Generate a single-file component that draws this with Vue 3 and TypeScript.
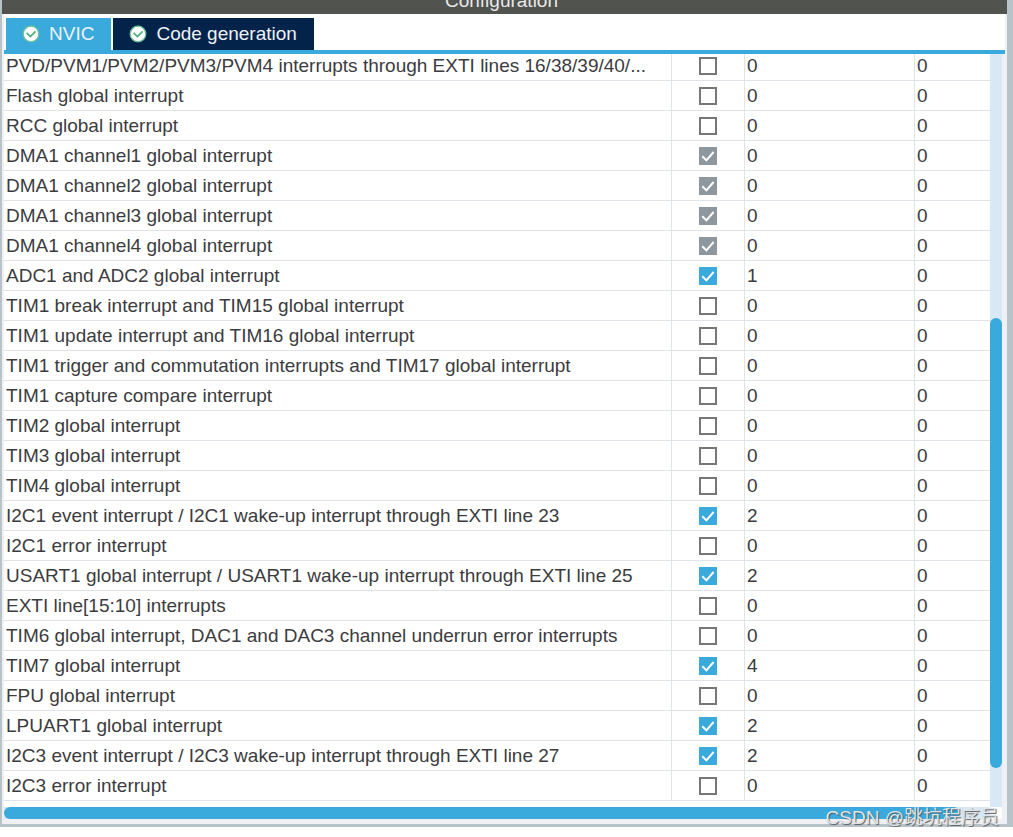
<script setup lang="ts">
import { ref } from 'vue'

interface Interrupt {
  name: string
  enabled: boolean
  locked: boolean
  preemption: number
  sub: number
}

const row = (name: string, enabled = false, preemption = 0, locked = false): Interrupt => ({
  name,
  enabled,
  locked,
  preemption,
  sub: 0,
})

const interrupts = ref<Interrupt[]>([
  row('PVD/PVM1/PVM2/PVM3/PVM4 interrupts through EXTI lines 16/38/39/40/...'),
  row('Flash global interrupt'),
  row('RCC global interrupt'),
  row('DMA1 channel1 global interrupt', true, 0, true),
  row('DMA1 channel2 global interrupt', true, 0, true),
  row('DMA1 channel3 global interrupt', true, 0, true),
  row('DMA1 channel4 global interrupt', true, 0, true),
  row('ADC1 and ADC2 global interrupt', true, 1),
  row('TIM1 break interrupt and TIM15 global interrupt'),
  row('TIM1 update interrupt and TIM16 global interrupt'),
  row('TIM1 trigger and commutation interrupts and TIM17 global interrupt'),
  row('TIM1 capture compare interrupt'),
  row('TIM2 global interrupt'),
  row('TIM3 global interrupt'),
  row('TIM4 global interrupt'),
  row('I2C1 event interrupt / I2C1 wake-up interrupt through EXTI line 23', true, 2),
  row('I2C1 error interrupt'),
  row('USART1 global interrupt / USART1 wake-up interrupt through EXTI line 25', true, 2),
  row('EXTI line[15:10] interrupts'),
  row('TIM6 global interrupt, DAC1 and DAC3 channel underrun error interrupts'),
  row('TIM7 global interrupt', true, 4),
  row('FPU global interrupt'),
  row('LPUART1 global interrupt', true, 2),
  row('I2C3 event interrupt / I2C3 wake-up interrupt through EXTI line 27', true, 2),
  row('I2C3 error interrupt'),
])

const tabs = ['NVIC', 'Code generation']
const active = ref('NVIC')
</script>

<template>
  <main class="panel">
    <header class="title"><h1>Configuration</h1></header>
    <div class="body">
      <nav class="tabs" role="tablist">
        <button
          v-for="tab in tabs"
          :key="tab"
          type="button"
          role="tab"
          class="tab"
          :class="{ active: tab === active }"
          :aria-selected="tab === active"
          @click="active = tab"
        >
          <svg class="status" viewBox="0 0 18 18" aria-hidden="true">
            <circle cx="9" cy="9" r="7.8" fill="#fff" stroke="#6cc394" stroke-width="1.3" />
            <path d="M4.6 7.8 8.4 11.6 13.6 6.4" fill="none" stroke="#4db37d" stroke-width="1.8" />
          </svg>
          <span>{{ tab }}</span>
        </button>
      </nav>
      <div class="content">
        <div class="viewport">
          <table class="grid">
            <colgroup>
              <col />
              <col class="col-enabled" />
              <col class="col-preemption" />
              <col class="col-sub" />
            </colgroup>
            <tbody>
              <tr v-for="(item, i) in interrupts" :key="item.name">
                <td><label class="name" :for="`irq-${i}`">{{ item.name }}</label></td>
                <td>
                  <span class="check">
                    <input :id="`irq-${i}`" v-model="item.enabled" type="checkbox" :disabled="item.locked" />
                    <svg v-if="item.enabled" viewBox="0 0 18 18" aria-hidden="true">
                      <path d="M3.3 9.3 7.4 13.4 14.6 5" fill="none" stroke="#fff" stroke-width="2" />
                    </svg>
                  </span>
                </td>
                <td>{{ item.preemption }}</td>
                <td>{{ item.sub }}</td>
              </tr>
            </tbody>
          </table>
        </div>
        <div class="track vertical"><div class="thumb"></div></div>
        <div class="track horizontal"><div class="thumb"></div></div>
        <div class="corner"></div>
      </div>
    </div>
    <span class="watermark">CSDN @跳坑程序员</span>
  </main>
</template>

<style>
body {
  background: #fff;
}
</style>

<style scoped>
.panel {
  position: relative;
  box-sizing: border-box;
  border: solid #b8c3c9;
  border-width: 0 6px 3px 2px;
  background: #eef0f4;
  color: #3c3c3e;
  font: 19px/22px "Liberation Sans", Arial, "Noto Sans CJK SC", sans-serif;
}
.title {
  display: flex;
  align-items: flex-end;
  justify-content: center;
  height: 14px;
  overflow: hidden;
  background: #51534f;
  color: #e8e8e8;
}
.title h1 {
  margin: 0 6px 2px 0;
  font: inherit;
}
.body {
  padding: 0 2px 5px;
}
.tabs {
  display: flex;
  gap: 2px;
  padding: 4px 2px 0;
  background: #fff;
  border-bottom: 4px solid #3aa9dc;
}
.tab {
  display: flex;
  align-items: center;
  gap: 9px;
  height: 32px;
  padding: 0 17px 0 16px;
  border: 0;
  background: #03234b;
  color: #eef2f7;
  font: inherit;
}
.tab.active {
  background: #3aa9dc;
}
.status {
  width: 18px;
  height: 18px;
}
.content {
  display: grid;
  grid-template-columns: minmax(0, 1fr) 12px;
  padding-right: 3px;
}
.viewport {
  overflow: hidden;
  padding-bottom: 6px;
  background: #fff;
}
.grid {
  width: 100%;
  margin-top: -3px;
  border-collapse: separate;
  border-spacing: 0;
  table-layout: fixed;
}
.col-enabled {
  width: 73px;
}
.col-preemption {
  width: 170px;
}
.col-sub {
  width: 76px;
}
td {
  box-sizing: border-box;
  height: 30px;
  padding: 0 2px;
  border-bottom: 1px solid #e0e4e8;
}
td + td {
  border-left: 1px solid #e0e4e8;
}
.name {
  display: block;
  overflow: hidden;
  text-overflow: ellipsis;
  white-space: nowrap;
}
.check {
  display: grid;
  width: 18px;
  height: 18px;
  margin: 0 auto;
}
.check > * {
  grid-area: 1 / 1;
  width: 18px;
  height: 18px;
}
.check svg {
  pointer-events: none;
}
input {
  box-sizing: border-box;
  margin: 0;
  appearance: none;
  border: 2px solid #777;
  background: #fff;
}
input:checked {
  border: 0;
  background: #3aa9dc;
}
input:checked:disabled {
  background: #8f979e;
}
.track {
  background: #d9e8f5;
}
.thumb {
  background: #3aa9dc;
  border-radius: 6px;
}
.vertical {
  display: flex;
  flex-direction: column;
  justify-content: flex-end;
  padding-bottom: 39px;
}
.vertical .thumb {
  height: 63%;
}
.horizontal {
  height: 12px;
}
.horizontal .thumb {
  width: 97%;
  height: 12px;
}
.corner {
  background: #fff;
}
.watermark {
  position: absolute;
  right: 8px;
  bottom: -6px;
  color: #dfe3e6;
  font-size: 19px;
  line-height: 24px;
  text-shadow: 1px 1px 1px #555b60;
  white-space: nowrap;
}
</style>
